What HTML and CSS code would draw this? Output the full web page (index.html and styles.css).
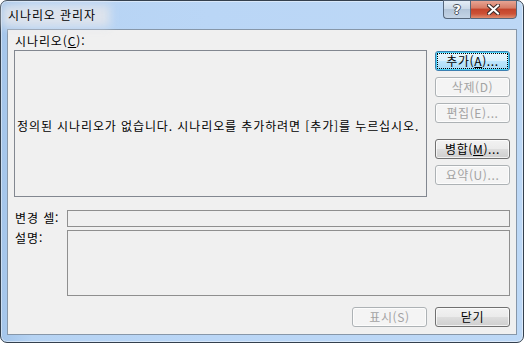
FILE: index.html
```html
<!DOCTYPE html>
<html lang="ko">
<head>
    <meta charset="UTF-8">
    <title>시나리오 관리자</title>
    <link rel="stylesheet" href="styles.css">
</head>
<body>

    <!-- Dialog window -->
    <div class="window">

        <!-- Title bar -->
        <div class="titlebar">
            <span class="title">시나리오 관리자</span>
            <div class="caption-buttons">
                <span class="cap-help">?</span>
                <span class="cap-close">
                    <svg width="13" height="11" viewBox="0 0 13 11">
                        <path d="M2 1.5 L11 9.5 M11 1.5 L2 9.5" stroke="#3a2a28" stroke-width="4" stroke-linecap="square"/>
                        <path d="M2 1.5 L11 9.5 M11 1.5 L2 9.5" stroke="#ffffff" stroke-width="2" stroke-linecap="square"/>
                    </svg>
                </span>
            </div>
        </div>

        <!-- Client area -->
        <div class="client">
            <div class="top">
                <div class="list-col">
                    <div class="list-label">시나리오(<u>C</u>):</div>
                    <div class="listbox">정의된 시나리오가 없습니다. 시나리오를 추가하려면 [추가]를 누르십시오.</div>
                </div>
                <div class="side-buttons">
                    <button class="btn default"><span class="focus">추가(<u>A</u>)...</span></button>
                    <button class="btn disabled">삭제(D)</button>
                    <button class="btn disabled">편집(E)...</button>
                    <button class="btn merge">병합(<u>M</u>)...</button>
                    <button class="btn disabled">요약(U)...</button>
                </div>
            </div>

            <div class="field-row">
                <span class="field-label">변경 셀:</span>
                <div class="field-input"></div>
            </div>
            <div class="field-row desc">
                <span class="field-label">설명:</span>
                <div class="field-area"></div>
            </div>

            <div class="footer">
                <button class="btn disabled">표시(S)</button>
                <button class="btn">닫기</button>
            </div>
        </div>
    </div>

</body>
</html>
```

FILE: styles.css
```css
/* Basic Reset */
* { margin: 0; padding: 0; box-sizing: border-box; }

body {
    font-family: "Noto Sans CJK KR", "Liberation Sans", sans-serif;
    font-size: 12px;
    letter-spacing: 0.9px;
    color: #000;
    background-color: #ffffff;
}

/* Window frame */
.window {
    width: 524px;
    height: 343px;
    display: flex;
    flex-direction: column;
    padding: 0 6px 7px 6px;
    border: 1px solid #34404e;
    border-radius: 7px;
    background: linear-gradient(to right, #a4c5ea 0, #b6d3f3 6%, #bad6f6 40%, #bdd8f6 100%);
    box-shadow: inset 0 0 0 1px rgba(255, 255, 255, 0.45);
}

/* Title bar */
.titlebar {
    height: 28px;
    display: flex;
    justify-content: space-between;
    align-items: flex-start;
}
.title {
    position: relative;
    margin: 6px 0 0 1px;
    line-height: 16px;
    z-index: 0;
}
.title::before {
    content: "";
    position: absolute;
    left: -6px;
    right: -14px;
    top: -2px;
    bottom: -4px;
    background: rgba(222, 228, 236, 0.95);
    filter: blur(4px);
    z-index: -1;
}

.caption-buttons {
    display: flex;
    height: 19px;
    margin-top: -1px;
}
.cap-help {
    width: 27px;
    height: 19px;
    border: 1px solid #56667a;
    border-right: none;
    border-radius: 0 0 0 4px;
    background: linear-gradient(#e4edf7 0%, #cbd9e8 45%, #b3c5d9 50%, #c4d4e6 100%);
    color: #fff;
    font-family: "DejaVu Sans", sans-serif;
    font-weight: bold;
    font-size: 13px;
    line-height: 17px;
    letter-spacing: 0;
    text-align: center;
    text-shadow: 1px 0 0 #47505c, -1px 0 0 #47505c, 0 1px 0 #47505c, 0 -1px 0 #47505c;
}
.cap-close {
    width: 47px;
    height: 19px;
    border: 1px solid #56667a;
    border-radius: 0 0 4px 0;
    background: linear-gradient(#e7a493 0%, #d77d67 40%, #c4452c 50%, #cc5136 75%, #e08d70 100%);
    display: flex;
    align-items: center;
    justify-content: center;
    padding-bottom: 1px;
}

/* Client area */
.client {
    flex: 1;
    display: flex;
    flex-direction: column;
    background-color: #f0f0f0;
    border: 1px solid #8797a9;
    padding: 3px 6px 6px 6px;
}

.top {
    display: flex;
    gap: 8px;
}
.list-col {
    width: 413px;
}
.list-label {
    line-height: 16px;
    padding-left: 1px;
    margin-bottom: 1px;
}
.listbox {
    height: 147px;
    border: 1px solid #828790;
    background-color: #f0f0f0;
    display: flex;
    align-items: center;
    padding: 4px 0 0 2px;
    white-space: nowrap;
}

.side-buttons {
    display: flex;
    flex-direction: column;
    gap: 6px;
    padding-top: 18px;
}
.side-buttons .merge {
    margin-top: 10px;
}

/* Buttons */
.btn {
    width: 75px;
    height: 20px;
    font-family: inherit;
    font-size: 12px;
    letter-spacing: 0.6px;
    line-height: 16px;
    color: #000;
    border: 1px solid #707070;
    border-radius: 3px;
    background: linear-gradient(#f2f2f2 0%, #ebebeb 48%, #dddddd 52%, #cfcfcf 100%);
    box-shadow: inset 0 0 0 1px rgba(255, 255, 255, 0.7);
}
.btn.disabled {
    color: #a3a3a3;
    border-color: #adb2b5;
    background: #f4f4f4;
}
.btn.default {
    border-color: #3c7fb1;
    background: linear-gradient(#eaf6fd 0%, #d9f0fc 48%, #bee6fd 52%, #a7d9f5 100%);
    box-shadow: inset 0 0 0 1px #48d2f7;
    padding: 2px;
}
.btn .focus {
    display: block;
    height: 14px;
    line-height: 13px;
    outline: 1px dotted #000;
}

/* Changing cells / comment */
.field-row {
    display: flex;
    margin-top: 13px;
}
.field-row.desc {
    margin-top: 3px;
}
.field-label {
    width: 53px;
    padding-left: 1px;
    line-height: 16px;
}
.field-input {
    flex: 1;
    height: 17px;
    border: 1px solid #8f8f8f;
    background-color: #f0f0f0;
}
.field-area {
    flex: 1;
    height: 66px;
    border: 1px solid #8f8f8f;
    background-color: #f0f0f0;
}

.footer {
    display: flex;
    justify-content: flex-end;
    gap: 8px;
    margin-top: 11px;
}
```
